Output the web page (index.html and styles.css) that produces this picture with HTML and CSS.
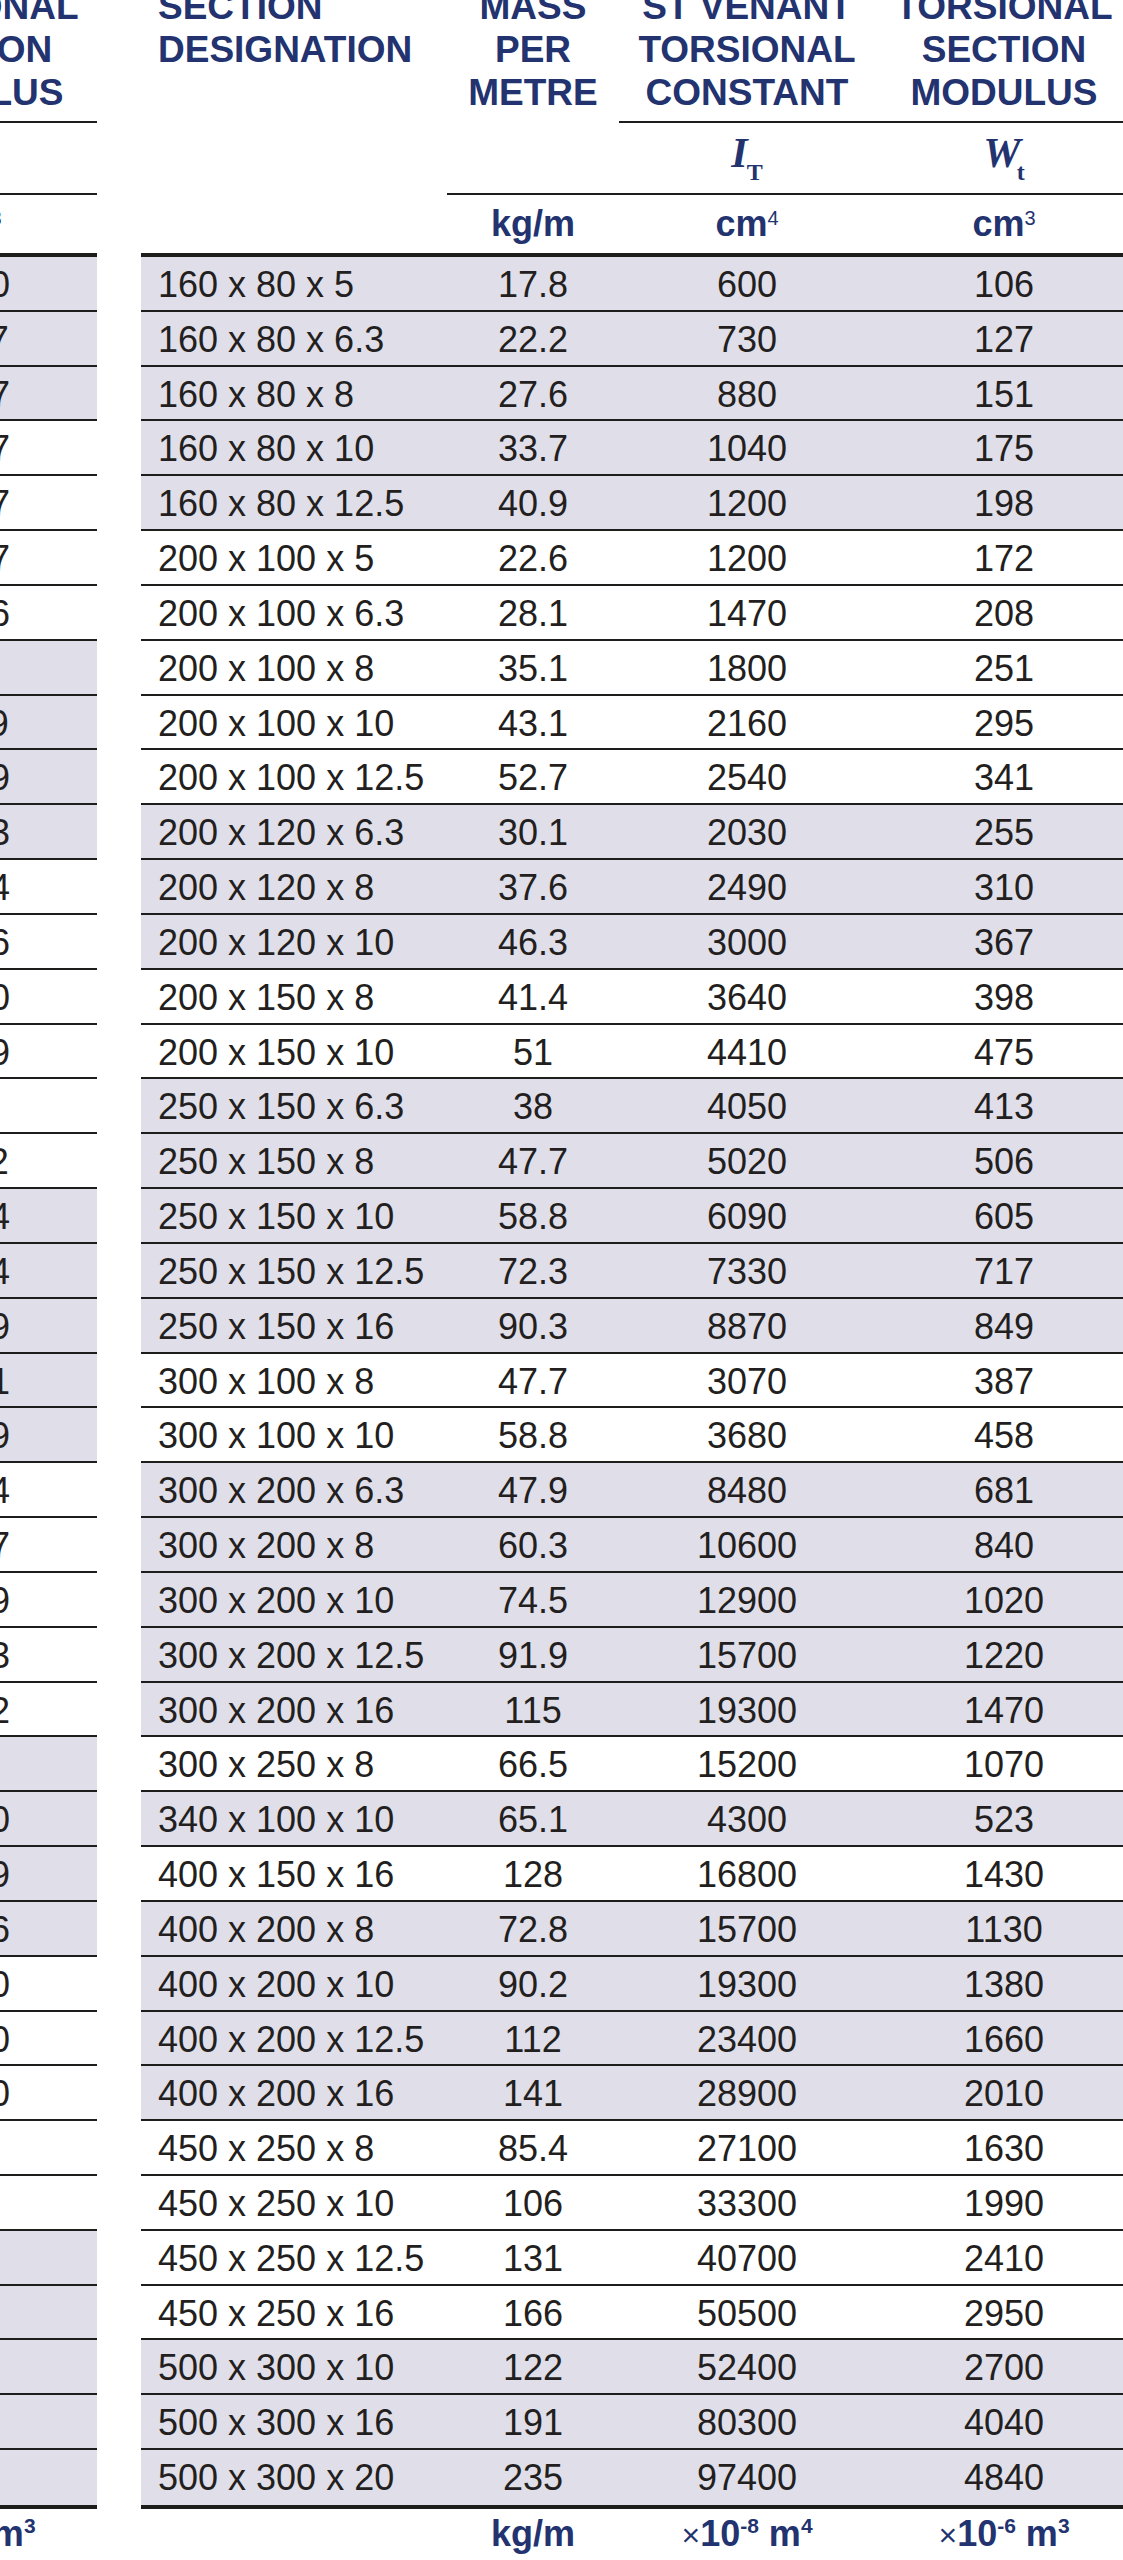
FILE: index.html
```html
<!DOCTYPE html>
<html lang="en">
<head>
<meta charset="utf-8">
<title>Section properties</title>
<link rel="stylesheet" href="styles.css">
</head>
<body>
<div class="page">
  <div class="frag">
    <div class="frag-inner">
      <div class="head head-frag">
        <div class="h-name"><div class="htxt">TORSIONAL<br>SECTION<br>MODULUS</div></div>
        <div class="h-sym"><i>W</i><span class="sub st">t</span></div>
        <div class="h-unit">cm<sup>3</sup></div>
      </div>
      <div class="body">
        <div class="r fr s"><span>1060</span></div>
        <div class="r fr s"><span>1197</span></div>
        <div class="r fr s"><span>1227</span></div>
        <div class="r fr"><span>1267</span></div>
        <div class="r fr"><span>1307</span></div>
        <div class="r fr"><span>1347</span></div>
        <div class="r fr"><span>1386</span></div>
        <div class="r fr s"><span>890</span></div>
        <div class="r fr s"><span>1109</span></div>
        <div class="r fr s"><span>1249</span></div>
        <div class="r fr s"><span>1403</span></div>
        <div class="r fr"><span>1574</span></div>
        <div class="r fr"><span>1726</span></div>
        <div class="r fr"><span>1860</span></div>
        <div class="r fr"><span>1979</span></div>
        <div class="r fr"><span>962</span></div>
        <div class="r fr"><span>1142</span></div>
        <div class="r fr s"><span>1314</span></div>
        <div class="r fr s"><span>1474</span></div>
        <div class="r fr s"><span>1619</span></div>
        <div class="r fr s"><span>1771</span></div>
        <div class="r fr s"><span>1929</span></div>
        <div class="r fr"><span>2064</span></div>
        <div class="r fr"><span>2197</span></div>
        <div class="r fr"><span>2329</span></div>
        <div class="r fr"><span>2473</span></div>
        <div class="r fr"><span>2612</span></div>
        <div class="r fr s"><span>770</span></div>
        <div class="r fr s"><span>1010</span></div>
        <div class="r fr s"><span>1229</span></div>
        <div class="r fr s"><span>1436</span></div>
        <div class="r fr"><span>1640</span></div>
        <div class="r fr"><span>1820</span></div>
        <div class="r fr"><span>2010</span></div>
        <div class="r fr"><span>905</span></div>
        <div class="r fr"><span>958</span></div>
        <div class="r fr s"><span>615</span></div>
        <div class="r fr s"><span>720</span></div>
        <div class="r fr s"><span>810</span></div>
        <div class="r fr s"><span>866</span></div>
        <div class="r fr s"><span>990</span></div>
      </div>
      <div class="foot foot-frag"><span><span class="x">×</span>10<sup>-6</sup> m<sup>3</sup></span></div>
    </div>
  </div>

  <div class="main">
    <div class="tbl">
      <div class="head head-main">
        <div class="h-desig"><div class="htxt">SECTION<br>DESIGNATION</div></div>
        <div class="h-mass"><div class="htxt">MASS<br>PER<br>METRE</div></div>
        <div class="h-name c2"><div class="htxt">ST VENANT<br>TORSIONAL<br>CONSTANT</div></div>
        <div class="h-name c3"><div class="htxt">TORSIONAL<br>SECTION<br>MODULUS</div></div>
        <div class="h-sym c2"><i>I</i><span class="sub sT">T</span></div>
        <div class="h-sym c3"><i>W</i><span class="sub st">t</span></div>
        <div class="h-unit c1">kg/m</div>
        <div class="h-unit c2">cm<sup>4</sup></div>
        <div class="h-unit c3">cm<sup>3</sup></div>
      </div>
      <div class="body">
        <div class="r s"><span class="d">160 x 80 x 5</span><span>17.8</span><span>600</span><span>106</span></div>
        <div class="r s"><span class="d">160 x 80 x 6.3</span><span>22.2</span><span>730</span><span>127</span></div>
        <div class="r s"><span class="d">160 x 80 x 8</span><span>27.6</span><span>880</span><span>151</span></div>
        <div class="r s"><span class="d">160 x 80 x 10</span><span>33.7</span><span>1040</span><span>175</span></div>
        <div class="r s"><span class="d">160 x 80 x 12.5</span><span>40.9</span><span>1200</span><span>198</span></div>
        <div class="r"><span class="d">200 x 100 x 5</span><span>22.6</span><span>1200</span><span>172</span></div>
        <div class="r"><span class="d">200 x 100 x 6.3</span><span>28.1</span><span>1470</span><span>208</span></div>
        <div class="r"><span class="d">200 x 100 x 8</span><span>35.1</span><span>1800</span><span>251</span></div>
        <div class="r"><span class="d">200 x 100 x 10</span><span>43.1</span><span>2160</span><span>295</span></div>
        <div class="r"><span class="d">200 x 100 x 12.5</span><span>52.7</span><span>2540</span><span>341</span></div>
        <div class="r s"><span class="d">200 x 120 x 6.3</span><span>30.1</span><span>2030</span><span>255</span></div>
        <div class="r s"><span class="d">200 x 120 x 8</span><span>37.6</span><span>2490</span><span>310</span></div>
        <div class="r s"><span class="d">200 x 120 x 10</span><span>46.3</span><span>3000</span><span>367</span></div>
        <div class="r"><span class="d">200 x 150 x 8</span><span>41.4</span><span>3640</span><span>398</span></div>
        <div class="r"><span class="d">200 x 150 x 10</span><span>51</span><span>4410</span><span>475</span></div>
        <div class="r s"><span class="d">250 x 150 x 6.3</span><span>38</span><span>4050</span><span>413</span></div>
        <div class="r s"><span class="d">250 x 150 x 8</span><span>47.7</span><span>5020</span><span>506</span></div>
        <div class="r s"><span class="d">250 x 150 x 10</span><span>58.8</span><span>6090</span><span>605</span></div>
        <div class="r s"><span class="d">250 x 150 x 12.5</span><span>72.3</span><span>7330</span><span>717</span></div>
        <div class="r s"><span class="d">250 x 150 x 16</span><span>90.3</span><span>8870</span><span>849</span></div>
        <div class="r"><span class="d">300 x 100 x 8</span><span>47.7</span><span>3070</span><span>387</span></div>
        <div class="r"><span class="d">300 x 100 x 10</span><span>58.8</span><span>3680</span><span>458</span></div>
        <div class="r s"><span class="d">300 x 200 x 6.3</span><span>47.9</span><span>8480</span><span>681</span></div>
        <div class="r s"><span class="d">300 x 200 x 8</span><span>60.3</span><span>10600</span><span>840</span></div>
        <div class="r s"><span class="d">300 x 200 x 10</span><span>74.5</span><span>12900</span><span>1020</span></div>
        <div class="r s"><span class="d">300 x 200 x 12.5</span><span>91.9</span><span>15700</span><span>1220</span></div>
        <div class="r s"><span class="d">300 x 200 x 16</span><span>115</span><span>19300</span><span>1470</span></div>
        <div class="r"><span class="d">300 x 250 x 8</span><span>66.5</span><span>15200</span><span>1070</span></div>
        <div class="r s"><span class="d">340 x 100 x 10</span><span>65.1</span><span>4300</span><span>523</span></div>
        <div class="r"><span class="d">400 x 150 x 16</span><span>128</span><span>16800</span><span>1430</span></div>
        <div class="r s"><span class="d">400 x 200 x 8</span><span>72.8</span><span>15700</span><span>1130</span></div>
        <div class="r s"><span class="d">400 x 200 x 10</span><span>90.2</span><span>19300</span><span>1380</span></div>
        <div class="r s"><span class="d">400 x 200 x 12.5</span><span>112</span><span>23400</span><span>1660</span></div>
        <div class="r s"><span class="d">400 x 200 x 16</span><span>141</span><span>28900</span><span>2010</span></div>
        <div class="r"><span class="d">450 x 250 x 8</span><span>85.4</span><span>27100</span><span>1630</span></div>
        <div class="r"><span class="d">450 x 250 x 10</span><span>106</span><span>33300</span><span>1990</span></div>
        <div class="r"><span class="d">450 x 250 x 12.5</span><span>131</span><span>40700</span><span>2410</span></div>
        <div class="r"><span class="d">450 x 250 x 16</span><span>166</span><span>50500</span><span>2950</span></div>
        <div class="r s"><span class="d">500 x 300 x 10</span><span>122</span><span>52400</span><span>2700</span></div>
        <div class="r s"><span class="d">500 x 300 x 16</span><span>191</span><span>80300</span><span>4040</span></div>
        <div class="r s"><span class="d">500 x 300 x 20</span><span>235</span><span>97400</span><span>4840</span></div>
      </div>
      <div class="foot foot-main">
        <span></span>
        <span>kg/m</span>
        <span><span class="x">×</span>10<sup>-8</sup> m<sup>4</sup></span>
        <span><span class="x">×</span>10<sup>-6</sup> m<sup>3</sup></span>
      </div>
    </div>
  </div>
</div>
</body>
</html>
```

FILE: styles.css
```css
* {
  box-sizing: border-box;
}

html,
body {
  margin: 0;
  padding: 0;
  background: #ffffff;
}

body {
  width: 1123px;
  height: 2560px;
  overflow: hidden;
  font-family: "Liberation Sans", Arial, sans-serif;
  color: #231f20;
}

.page {
  display: flex;
  gap: 44px;
  align-items: flex-start;
}

/* left: clipped last column of the previous table */
.frag {
  flex: none;
  width: 97px;
  overflow: hidden;
}

.frag-inner {
  width: 254px;
  margin-left: -157px;
}

.main {
  flex: 1;
  min-width: 0;
  overflow: hidden;
}

.tbl {
  width: 992px;
}

/* ---------- header ---------- */
.head {
  display: grid;
  grid-template-rows: 123px 72px 58px;
  border-bottom: 4px solid #1d1d1b;
  color: #22336f;
}

.head-main {
  grid-template-columns: 306px 172px 256px 258px;
}

.head-frag {
  grid-template-columns: 254px;
}

.htxt {
  margin-top: -15px;
  font-weight: 700;
  font-size: 37px;
  line-height: 43px;
  white-space: nowrap;
}

.h-desig {
  grid-column: 1;
  grid-row: 1 / 4;
  padding-left: 17px;
}

.h-mass {
  grid-column: 2;
  grid-row: 1 / 3;
  text-align: center;
  border-bottom: 2px solid #1d1d1b;
}

.h-name {
  grid-row: 1;
  text-align: center;
  border-bottom: 2px solid #1d1d1b;
}

.h-sym {
  grid-row: 2;
  text-align: center;
  border-bottom: 2px solid #1d1d1b;
  font-family: "Liberation Serif", "Times New Roman", serif;
  font-weight: 700;
  font-size: 42px;
  line-height: 42px;
  padding-top: 9px;
  white-space: nowrap;
}

.h-sym i {
  font-style: italic;
}

.sub {
  font-size: 24px;
  font-style: normal;
  vertical-align: -13px;
  line-height: 0;
}

.sT {
  margin-left: -1px;
}

.st {
  margin-left: -4px;
}

.h-unit {
  grid-row: 3;
  text-align: center;
  font-weight: 700;
  font-size: 36px;
  line-height: 58px;
  white-space: nowrap;
}

.h-unit sup {
  font-size: 20px;
  font-weight: 400;
  vertical-align: 11px;
  line-height: 0;
}

.head-main .c1 { grid-column: 2; }
.head-main .c2 { grid-column: 3; }
.head-main .c3 { grid-column: 4; }

/* ---------- body rows ---------- */
.r {
  display: grid;
  grid-template-columns: 306px 172px 256px 258px;
  height: 54.83px;
  border-bottom: 2px solid #1d1d1b;
  font-size: 36px;
  line-height: 55px;
  white-space: nowrap;
}

.r.fr {
  grid-template-columns: 254px;
}

.r:last-child {
  border-bottom: 0;
}

.r.s {
  background: #dfdee9;
}

.r span {
  text-align: center;
}

.r .d {
  text-align: left;
  padding-left: 17px;
}

.body {
  border-bottom: 4px solid #1d1d1b;
}

/* ---------- footer units ---------- */
.foot {
  display: grid;
  padding-top: 4px;
  font-weight: 700;
  font-size: 36px;
  line-height: 41px;
  color: #22336f;
  white-space: nowrap;
}

.foot-main {
  grid-template-columns: 306px 172px 256px 258px;
}

.foot-frag {
  grid-template-columns: 254px;
}

.foot > span {
  text-align: center;
}

.foot .x {
  font-weight: 400;
  font-size: 32px;
}

.foot sup {
  font-size: 21px;
  vertical-align: 13px;
  line-height: 0;
}
```
